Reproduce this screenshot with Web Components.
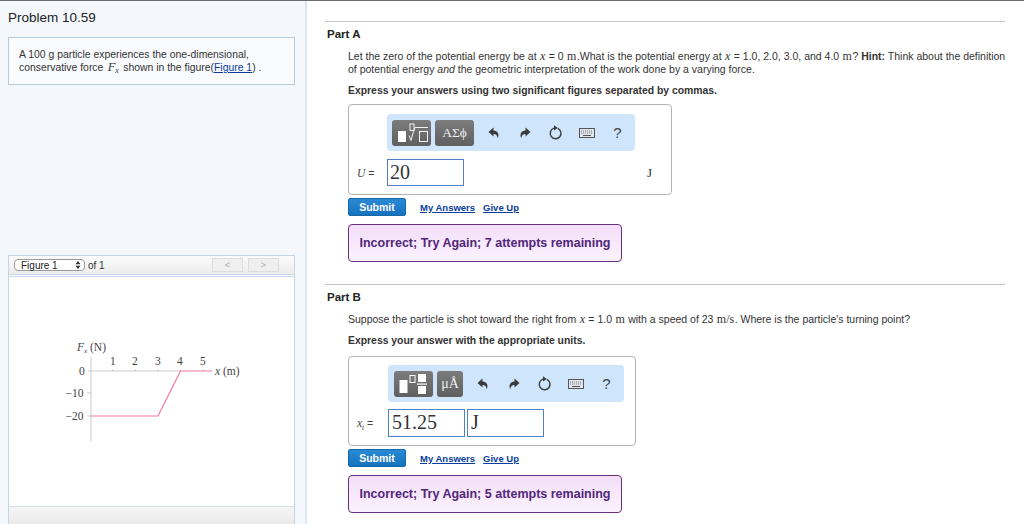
<!DOCTYPE html>
<html>
<head>
<meta charset="utf-8">
<style>
  html, body { margin: 0; height: 100%; background: #fff; overflow: hidden; }
  body { font-family: "Liberation Sans", Arial, sans-serif; color: #333; }
  p { white-space: nowrap; }
  .var { font-family: "Liberation Serif", serif; font-style: italic; font-size: 12px; margin: 0 .5px; }
  .unit { font-family: "Liberation Serif", serif; font-size: 12px; margin: 0 .5px; }
  b[slot="ask"] { font-size: 10.400px; }
</style>
</head>
<body>
<mp-page>
  <mp-problem slot="left" heading="Problem 10.59">
    A 100 g particle experiences the one-dimensional,<br>conservative force <i style="font-family:'Liberation Serif',serif;font-size:12.500px;margin:0 1.500px">F<sub style="font-size:8px;line-height:0;vertical-align:-2px">x</sub></i> shown in the figure(<a style="color:#0a3c9c" href="#">Figure 1</a>) .
  </mp-problem>
  <mp-part slot="right" label="Part A" style="--top-gap:20px;--box-gap:7px">
    <p slot="text" style="margin:0;line-height:13px;height:26px">Let the zero of the potential energy be at <span class="var">x</span> = 0 <span class="unit">m</span>.What is the potential energy at <span class="var">x</span> = 1.0, 2.0, 3.0, and 4.0 <span class="unit">m</span>? <b>Hint:</b> Think about the definition<br>of potential energy <i>and</i> the geometric interpretation of the work done by a varying force.</p>
    <b slot="ask">Express your answers using two significant figures separated by commas.</b>
    <mp-answer slot="answer" symbol="U" unit="J" style="--box-w:324px;--box-h:91px;--tool-w:248px;--tool-left:38px;--tool-top:9px;--row-gap:8px;--field-h:27px">
      <mp-palette kind="root"></mp-palette>
      <mp-field slot="fields" value="20" style="--pad:2px"></mp-field>
    </mp-answer>
    <span slot="feedback">Incorrect; Try Again; 7 attempts remaining</span>
  </mp-part>
  <mp-part slot="right" label="Part B" style="--top-gap:22px;--box-gap:9px">
    <p slot="text" style="margin:0;line-height:13px;height:13px">Suppose the particle is shot toward the right from <span class="var">x</span> = 1.0 <span class="unit">m</span> with a speed of 23 <span class="unit">m/s</span>. Where is the particle's turning point?</p>
    <b slot="ask">Express your answer with the appropriate units.</b>
    <mp-answer slot="answer" symbol="xt" style="--box-w:288px;--box-h:90px;--tool-w:236px;--tool-left:39px;--tool-top:8px;--row-gap:7px;--field-h:28px">
      <mp-palette kind="frac"></mp-palette>
      <mp-field slot="fields" value="51.25"></mp-field>
      <mp-field slot="fields" value="J"></mp-field>
    </mp-answer>
    <span slot="feedback">Incorrect; Try Again; 5 attempts remaining</span>
  </mp-part>
</mp-page>

<script>
// page frame: blue problem column on the left, parts on the right
class MpPage extends HTMLElement {
  constructor() {
    super();
    this.attachShadow({ mode: "open" }).innerHTML = `
      <style>
        :host { display: flex; width: 1024px; height: 524px; border-top: 1px solid #6b6b6b; box-sizing: border-box; overflow: hidden; }
        .left { width: 307px; flex: none; box-sizing: border-box; background: #f4f8fd; border-right: 2px solid #dce7f2; }
        .right { flex: 1; padding: 0 20px 0 18px; }
      </style>
      <div class="left"><slot name="left"></slot></div>
      <div class="right"><slot name="right"></slot></div>`;
  }
}

class MpProblem extends HTMLElement {
  constructor() {
    super();
    this.attachShadow({ mode: "open" }).innerHTML = `
      <style>
        :host { display: block; padding: 0 10px 0 8px; height: 100%; }
        h1 { font: 400 13.500px/16px "Liberation Sans", Arial, sans-serif; color: #222; margin: 0; padding-top: 9px; }
        .text { margin-top: 11px; height: 48px; box-sizing: border-box; background: #f9fbfe; border: 1px solid #b7cbdc; padding: 10px 10px 0; font-size: 10.400px; line-height: 13px; color: #333; }
        mp-figure { margin-top: 170px; }
      </style>
      <h1></h1>
      <div class="text"><slot></slot></div>
      <mp-figure></mp-figure>`;
    this.shadowRoot.querySelector("h1").textContent = this.getAttribute("heading");
  }
}

class MpFigure extends HTMLElement {
  constructor() {
    super();
    this.attachShadow({ mode: "open" }).innerHTML = `
      <style>
        :host { display: block; border: 1px solid #c4d6e6; border-bottom: 0; background: #fff; }
        .bar { height: 18px; display: flex; align-items: center; padding: 0 15px 0 5px; background: linear-gradient(#fbfbfb, #ececec); border-bottom: 1px solid #c9d9e7; font-size: 10px; color: #333; }
        .sel { width: 71px; height: 12px; box-sizing: border-box; border: 1px solid #9a9a9a; border-radius: 4px; background: #fff; display: flex; align-items: center; justify-content: space-between; padding: 0 3px 0 6px; margin-right: 3px; color: #222; }
        .sel svg { display: block; }
        .nav { margin-left: auto; display: flex; gap: 5px; }
        .nav span { width: 31px; height: 14px; box-sizing: border-box; border: 1px solid #ddd; background: #efefef; color: #aaa; text-align: center; line-height: 12px; font-size: 9px; }
        .plot { height: 229px; margin-top: 1px; border-top: 1px solid #c9d9e7; border-bottom: 1px solid #d5e1ec; }
        .plot svg { display: block; }
        .plot text { font-family: "Liberation Serif", serif; font-size: 11.500px; fill: #444; }
        .foot { height: 18px; background: linear-gradient(#f6f6f6, #e9e9e9); }
      </style>
      <div class="bar">
        <div class="sel">Figure 1
          <svg width="6" height="10" viewBox="0 0 6 10"><path d="M3 1 5.500 4.200H.5zM3 9 .5 5.800h5z" fill="#333"/></svg>
        </div>
        of 1
        <div class="nav"><span>&lt;</span><span>&gt;</span></div>
      </div>
      <div class="plot">
        <svg width="285" height="229" viewBox="0 0 285 229">
          <!-- same origin as the page: shifted by the figure box corner -->
          <g transform="translate(-9,-277)">
            <path d="M91 357V441" stroke="#dcdcdc" stroke-width="1.500" fill="none"/>
            <path d="M88 371H181" stroke="#bdbdbd" stroke-width=".8" fill="none"/>
            <path d="M87 393H91M87 416H91M113 369V371M135 369V371M158 369V371M203 369V371" stroke="#bdbdbd" stroke-width=".8" fill="none"/>
            <path d="M91 416H158L180.500 371H212" stroke="#f2789a" stroke-width="1.200" fill="none"/>
            <text x="77" y="351"><tspan font-style="italic">F</tspan><tspan font-style="italic" font-size="7" dy="2">x</tspan><tspan dy="-2"> (N)</tspan></text>
            <text x="110" y="365">1</text><text x="132" y="365">2</text><text x="155" y="365">3</text><text x="177" y="365">4</text><text x="200" y="365">5</text>
            <text x="79" y="375">0</text>
            <text x="65.500" y="397">−10</text>
            <text x="65.500" y="420">−20</text>
            <text x="215" y="375"><tspan font-style="italic">x</tspan> (m)</text>
          </g>
        </svg>
      </div>
      <div class="foot"></div>`;
  }
}

// one question part: rule, label, prompt, answer, buttons, feedback
class MpPart extends HTMLElement {
  constructor() {
    super();
    this.attachShadow({ mode: "open" }).innerHTML = `
      <style>
        :host { display: block; padding-top: var(--top-gap, 20px); font-size: 10.500px; color: #333; }
        .rule { height: 1px; background: #c4c4c4; }
        h2 { font: 700 11.500px/13px "Liberation Sans", Arial, sans-serif; color: #222; margin: 0; padding: 6px 0 0 2px; }
        .body { padding-left: 23px; }
        .text { padding-top: 9px; }
        .ask { padding-top: 8px; line-height: 13px; }
        .box { padding-top: var(--box-gap, 7px); }
        .actions { display: flex; align-items: center; margin-top: 3px; font-weight: 700; font-size: 9.500px; }
        .submit { width: 58px; height: 18px; box-sizing: border-box; border: 1px solid #1768a8; border-radius: 2px; background: linear-gradient(#2a8ad6, #1672bd); color: #fff; font: 700 10.500px/16px "Liberation Sans", Arial, sans-serif; text-align: center; }
        a { color: #0a3c9c; margin-left: 8px; }
        a:first-of-type { margin-left: 14px; }
        .fb { width: 274px; height: 38px; box-sizing: border-box; margin-top: 8px; border: 1px solid #66307e; border-radius: 4px; background: linear-gradient(#f3def8, #fbf2fe); color: #51267a; font: 700 12.500px/36px "Liberation Sans", Arial, sans-serif; text-align: center; white-space: nowrap; }
      </style>
      <div class="rule"></div>
      <h2></h2>
      <div class="body">
        <div class="text"><slot name="text"></slot></div>
        <div class="ask"><slot name="ask"></slot></div>
        <div class="box"><slot name="answer"></slot></div>
        <div class="actions"><span class="submit">Submit</span><a href="#">My Answers</a><a href="#">Give Up</a></div>
        <div class="fb"><slot name="feedback"></slot></div>
      </div>`;
    this.shadowRoot.querySelector("h2").textContent = this.getAttribute("label");
  }
}

class MpAnswer extends HTMLElement {
  constructor() {
    super();
    const symbol = this.getAttribute("symbol");
    const unit = this.getAttribute("unit") || "";
    this.attachShadow({ mode: "open" }).innerHTML = `
      <style>
        :host { display: block; width: var(--box-w); height: var(--box-h); box-sizing: border-box; border: 1px solid #b4b4b4; border-radius: 4px; background: #fff; }
        .tools { margin: var(--tool-top) 0 0 var(--tool-left); width: var(--tool-w); }
        .row { display: flex; align-items: center; margin-top: var(--row-gap); height: var(--field-h); }
        .sym { width: var(--tool-left); box-sizing: border-box; padding-left: 8px; font: italic 11.500px "Liberation Serif", serif; color: #444; white-space: nowrap; }
        .sym span { font: 10.500px "Liberation Sans", sans-serif; }
        .sym sub { font-size: 7.500px; line-height: 0; }
        .fields { display: flex; gap: 2px; }
        .unit { margin-left: auto; margin-right: 19px; font: 13px "Liberation Serif", serif; color: #333; }
      </style>
      <div class="tools"><slot></slot></div>
      <div class="row">
        <div class="sym"></div>
        <div class="fields"><slot name="fields"></slot></div>
        <div class="unit"></div>
      </div>`;
    const sym = this.shadowRoot.querySelector(".sym");
    sym.innerHTML = symbol === "xt" ? `x<sub>t</sub> <span>=</span>` : `${symbol} <span>=</span>`;
    this.shadowRoot.querySelector(".unit").textContent = unit;
  }
}

class MpField extends HTMLElement {
  constructor() {
    super();
    this.attachShadow({ mode: "open" }).innerHTML = `
      <style>
        :host { display: block; width: 77px; height: var(--field-h); box-sizing: border-box; border: 1px solid #4f7fc9; background: #fff; padding-left: var(--pad, 3px); font: 20px/25px "Liberation Serif", serif; color: #333; }
      </style><span></span>`;
    this.shadowRoot.querySelector("span").textContent = this.getAttribute("value");
  }
}

// math palette bar with the undo / redo / reset / keyboard / help icons
class MpPalette extends HTMLElement {
  constructor() {
    super();
    const root = this.getAttribute("kind") === "root";
    const first = root
      ? `<svg width="39" height="26" viewBox="0 0 39 26"><rect x="6" y="11" width="8" height="11" fill="#fff"/><rect x="18" y="4" width="4" height="6.500" fill="none" stroke="#fff" stroke-width=".9"/><path d="M17 15.500l2 5 2.500-9 1.500-4h13" fill="none" stroke="#fff" stroke-width=".9"/><rect x="27.500" y="11.500" width="8" height="10" fill="none" stroke="#fff" stroke-width=".9"/></svg>`
      : `<svg width="39" height="26" viewBox="0 0 39 26"><rect x="5.500" y="9" width="8" height="13" fill="#fff"/><rect x="16" y="4.500" width="5" height="7" fill="none" stroke="#fff"/><rect x="24" y="3" width="8" height="8" fill="#fff"/><rect x="23" y="12.500" width="10" height="1.200" fill="#fff"/><rect x="24" y="15" width="8" height="8" fill="#fff"/></svg>`;
    this.attachShadow({ mode: "open" }).innerHTML = `
      <style>
        :host { display: flex; align-items: center; height: 37px; box-sizing: border-box; padding-left: ${root ? 5 : 6}px; background: #cfe5fb; border-radius: 4px; }
        .btn { height: 26px; box-sizing: border-box; border-radius: 3px; background: linear-gradient(#7c7c7c, #5f5f5f); display: flex; align-items: center; justify-content: center; color: #f0f0f0; }
        .b1 { width: 39px; margin-right: 4px; }
        .b1 svg { display: block; }
        .b2 { width: ${root ? 39 : 26}px; font: ${root ? 13.5 : 14}px "Liberation Serif", "DejaVu Serif", serif; }
        .icons { display: flex; align-items: center; padding-left: 4px; }
        .icons > * { width: 31px; display: flex; justify-content: center; }
        .icons svg { display: block; }
        .help { font: 15px "Liberation Sans", sans-serif; color: #444; }
      </style>
      <div class="btn b1">${first}</div>
      <div class="btn b2">${root ? "ΑΣϕ" : "μÅ"}</div>
      <div class="icons">
        <div><svg width="12" height="12" viewBox="0 0 12 12"><path d="M5.500 .5 .5 5l5 4.500V7c2.300 0 3.600.9 4.300 4.300C11.500 7 10 3.700 5.500 3.400z" fill="#3b3b3b"/></svg></div>
        <div><svg width="12" height="12" viewBox="0 0 12 12"><path d="M6.500 .5 11.500 5l-5 4.500V7c-2.300 0-3.600.9-4.300 4.300C.5 7 2 3.700 6.500 3.400z" fill="#3b3b3b"/></svg></div>
        <div><svg width="15" height="15" viewBox="0 0 15 15"><path d="M9.800 3.400a5.400 5.400 0 1 1-3.800-.2" fill="none" stroke="#3b3b3b" stroke-width="1.400"/><path d="M6 .3 9.800 3 6 5.600z" fill="#3b3b3b"/></svg></div>
        <div><svg width="16" height="10" viewBox="0 0 16 10"><rect x=".5" y=".5" width="15" height="9" fill="#dfe6ee" stroke="#555"/><path d="M2 3h12M2 5h12" stroke="#777" stroke-dasharray="1 1"/><path d="M4 7.500h8" stroke="#555"/></svg></div>
        <div class="help">?</div>
      </div>`;
  }
}

customElements.define("mp-page", MpPage);
customElements.define("mp-figure", MpFigure);
customElements.define("mp-problem", MpProblem);
customElements.define("mp-part", MpPart);
customElements.define("mp-answer", MpAnswer);
customElements.define("mp-field", MpField);
customElements.define("mp-palette", MpPalette);
</script>
</body>
</html>
